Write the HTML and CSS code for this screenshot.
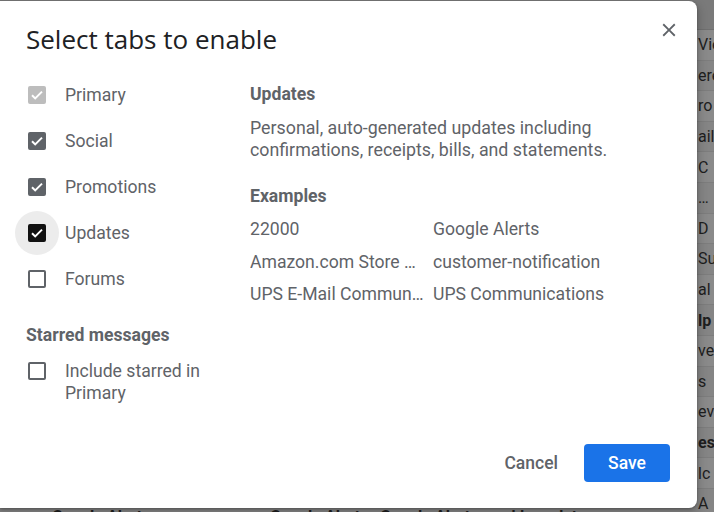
FILE: index.html
```html
<!DOCTYPE html>
<html lang="en">
<head>
<meta charset="utf-8">
<title>Select tabs to enable</title>
<link rel="stylesheet" href="styles.css">
</head>
<body>
<div class="backdrop">
  <div class="bg-head"></div>
  <div class="bg-list">
    <div class="bg-row"><span class="frag">View</span></div>
    <div class="bg-row"><span class="frag">ere</span></div>
    <div class="bg-row"><span class="frag">ro</span></div>
    <div class="bg-row"><span class="frag">ail</span></div>
    <div class="bg-row"><span class="frag">C</span></div>
    <div class="bg-row"><span class="frag">…</span></div>
    <div class="bg-row"><span class="frag">D</span></div>
    <div class="bg-row"><span class="frag">Su</span></div>
    <div class="bg-row"><span class="frag">al</span></div>
    <div class="bg-row"><span class="frag bold">lp</span></div>
    <div class="bg-row"><span class="frag">ve</span></div>
    <div class="bg-row"><span class="frag">s</span></div>
    <div class="bg-row"><span class="frag">ev</span></div>
    <div class="bg-row"><span class="frag bold">es</span></div>
    <div class="bg-row"><span class="frag">lc</span></div>
    <div class="bg-row last"><span class="low l1">Google Alerts</span><span class="low l2">Google Alerts</span><span class="low l3">Google Alerts weekly update</span><span class="frag">A</span></div>
  </div>
</div>

<div class="dialog" role="dialog">
  <div class="dlg-head">
    <h1 class="title">Select tabs to enable</h1>
    <button class="close" aria-label="Close">
      <svg viewBox="0 0 24 24" width="22" height="22"><path d="M19 6.41L17.59 5 12 10.59 6.41 5 5 6.41 10.59 12 5 17.59 6.41 19 12 13.41 17.59 19 19 17.59 13.41 12z" fill="#5f6368"/></svg>
    </button>
  </div>

  <div class="dlg-body">
    <div class="left">
      <div class="opt">
        <span class="halo"><span class="cb disabled"><svg viewBox="0 0 18 18"><path d="M4 9.2l3.2 3.2L14 5.6" fill="none" stroke="#fff" stroke-width="2"/></svg></span></span>
        <span class="lbl">Primary</span>
      </div>
      <div class="opt">
        <span class="halo"><span class="cb on"><svg viewBox="0 0 18 18"><path d="M4 9.2l3.2 3.2L14 5.6" fill="none" stroke="#fff" stroke-width="2"/></svg></span></span>
        <span class="lbl">Social</span>
      </div>
      <div class="opt">
        <span class="halo"><span class="cb on"><svg viewBox="0 0 18 18"><path d="M4 9.2l3.2 3.2L14 5.6" fill="none" stroke="#fff" stroke-width="2"/></svg></span></span>
        <span class="lbl">Promotions</span>
      </div>
      <div class="opt">
        <span class="halo focused"><span class="cb on active"><svg viewBox="0 0 18 18"><path d="M4 9.2l3.2 3.2L14 5.6" fill="none" stroke="#fff" stroke-width="2"/></svg></span></span>
        <span class="lbl">Updates</span>
      </div>
      <div class="opt">
        <span class="halo"><span class="cb"></span></span>
        <span class="lbl">Forums</span>
      </div>

      <h2 class="sub">Starred messages</h2>
      <div class="opt multi">
        <span class="halo"><span class="cb"></span></span>
        <span class="lbl">Include starred in Primary</span>
      </div>
    </div>

    <div class="right">
      <h2 class="head">Updates</h2>
      <p class="desc">Personal, auto-generated updates including confirmations, receipts, bills, and statements.</p>
      <h2 class="head ex">Examples</h2>
      <div class="examples">
        <span class="c1">22000</span><span class="c2">Google Alerts</span>
        <span class="c1">Amazon.com Store Card</span><span class="c2">customer-notification</span>
        <span class="c1">UPS E-Mail Communications</span><span class="c2">UPS Communications</span>
      </div>
    </div>
  </div>

  <div class="dlg-foot">
    <button class="btn text">Cancel</button>
    <button class="btn primary">Save</button>
  </div>
</div>
</body>
</html>
```

FILE: styles.css
```css
* { box-sizing: border-box; }
html, body { margin: 0; padding: 0; }
body {
  width: 714px;
  height: 512px;
  overflow: hidden;
  position: relative;
  font-family: Roboto, "Liberation Sans", sans-serif;
  background: #7c7c7c;
}

/* dimmed page behind the dialog */
.backdrop { width: 714px; height: 512px; }
.bg-head { height: 30px; background: #7a7a7a; border-bottom: 1px solid #6f6f6f; }
.bg-list { display: flex; flex-direction: column; }
.bg-row {
  height: 30.6px;
  background: #8a8a8a;
  border-bottom: 1px solid #7d7d7d;
  display: flex;
  align-items: center;
  position: relative;
  font-size: 16px;
  color: #1e1e1e;
  white-space: nowrap;
}
.bg-row:nth-child(even) { background: #858585; }
.frag { margin-left: 698px; }
.frag.bold { font-weight: 700; }
.bg-row.last .low { position: absolute; top: 18px; font-size: 16px; font-weight: 700; }
.l1 { left: 52px; }
.l2 { left: 270px; }
.l3 { left: 380px; }

/* dialog */
.dialog {
  position: absolute;
  left: 0;
  top: 1px;
  width: 697px;
  height: 507px;
  background: #fff;
  border-radius: 0 8px 8px 0;
  box-shadow: 0 4px 8px 3px rgba(0,0,0,.15), 0 1px 3px rgba(0,0,0,.3);
  display: flex;
  flex-direction: column;
  padding: 20px 27px 26px 26px;
}
.dlg-head {
  display: flex;
  justify-content: space-between;
  align-items: flex-start;
}
.title {
  margin: 0;
  font-family: "Open Sans", Roboto, sans-serif;
  font-weight: 400;
  font-size: 26px;
  line-height: 36px;
  color: #202124;
  letter-spacing: 0;
}
.close {
  border: 0;
  background: none;
  padding: 0;
  margin: -3px -11px 0 0;
  width: 24px;
  height: 24px;
  display: flex;
  align-items: center;
  justify-content: center;
}

.dlg-body {
  flex: 1;
  display: grid;
  grid-template-columns: 224px 1fr;
  margin-top: 15px;
}

.left { display: flex; flex-direction: column; }
.opt {
  height: 46px;
  display: flex;
  align-items: center;
}
.halo {
  flex: none;
  width: 44px;
  height: 44px;
  margin-left: -11px;
  border-radius: 50%;
  display: flex;
  align-items: center;
  justify-content: center;
}
.halo.focused { background: #ececec; }
.cb {
  flex: none;
  width: 18px;
  height: 18px;
  border: 2px solid #5f6368;
  border-radius: 2px;
  display: flex;
  align-items: center;
  justify-content: center;
}
.cb svg { width: 18px; height: 18px; flex: none; }
.cb.on { background: #5f6368; border-color: #5f6368; }
.cb.disabled { background: #bdbdbd; border-color: #bdbdbd; }
.cb.active { background: #111; border-color: #111; }
.lbl {
  margin-left: 6px;
  font-size: 17.6px;
  line-height: 22px;
  color: #5f6368;
}
.sub {
  margin: 22px 0 0;
  font-size: 17.6px;
  line-height: 22px;
  font-weight: 700;
  color: #5f6368;
}
.opt.multi {
  height: auto;
  align-items: flex-start;
  margin-top: 14px;
}
.opt.multi .halo { margin-top: -11px; }
.opt.multi .lbl { width: 160px; }

.right { padding-top: 11px; }
.head {
  margin: 0;
  font-size: 17.6px;
  line-height: 22px;
  font-weight: 700;
  color: #5f6368;
}
.desc {
  margin: 12px 0 0;
  font-size: 17.8px;
  line-height: 22px;
  color: #5f6368;
}
.head.ex { margin-top: 24px; }
.examples {
  margin-top: 6px;
  display: grid;
  grid-template-columns: 183px 1fr;
  grid-auto-rows: 32.5px;
  align-items: center;
  font-size: 17.6px;
  color: #5f6368;
}
.examples span {
  white-space: nowrap;
  overflow: hidden;
  text-overflow: ellipsis;
}
.c1 { padding-right: 8px; }

.dlg-foot {
  display: flex;
  justify-content: flex-end;
  align-items: center;
  gap: 2px;
}
.btn {
  height: 38px;
  border: 0;
  border-radius: 4px;
  font-family: Roboto, sans-serif;
  font-weight: 500;
  font-size: 17.5px;
  padding: 0 24px;
  cursor: pointer;
}
.btn.text { background: none; color: #5f6368; }
.btn.primary { background: #1a73e8; color: #fff; width: 86px; padding: 0; }
```
